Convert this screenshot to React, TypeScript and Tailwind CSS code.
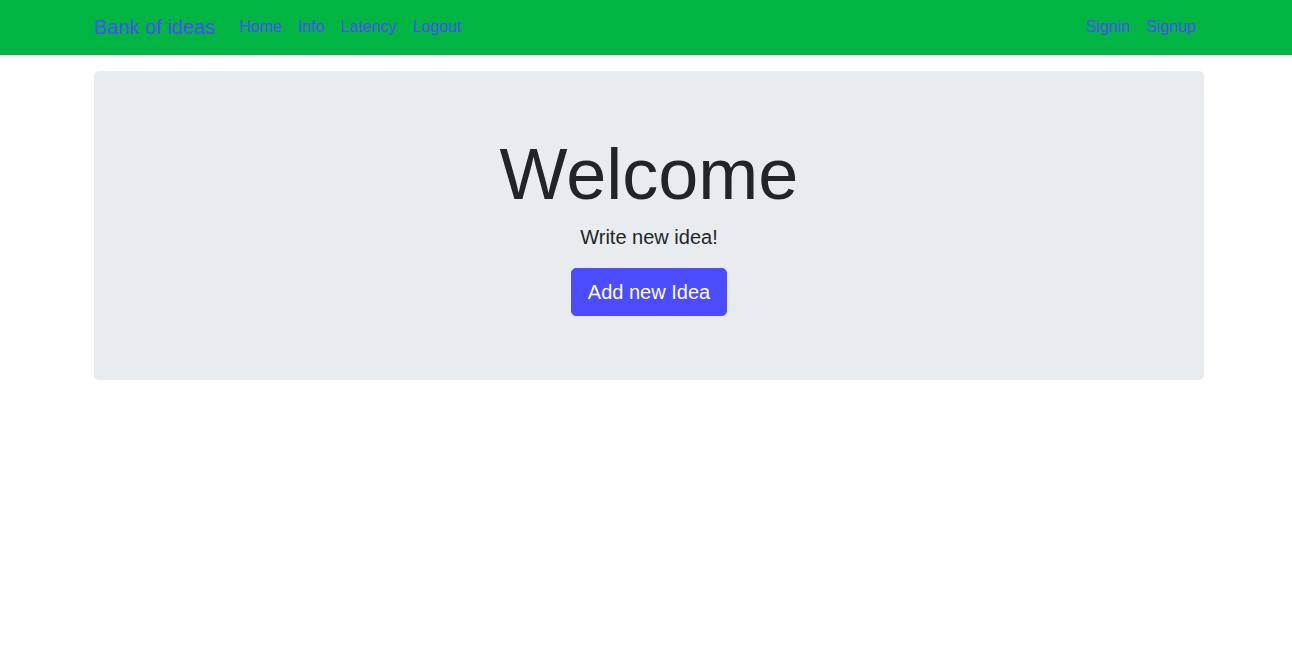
import React from "react";

export default function App() {
  return (
    <div className="min-h-screen bg-white text-[#212529]" style={{ fontFamily: '"Liberation Sans", Arial, sans-serif' }}>
      <nav className="bg-[#00b542] h-[55px] pb-[2px] flex items-center">
        <div className="ml-[94px] w-[1110px] flex items-center justify-between">
          <div className="flex items-center">
            <a className="text-[20px] leading-[30px] py-[5px] mr-4 text-[#4b4bff]" href="#">Bank of ideas</a>
            <div className="flex text-[16px] leading-6 text-[#4b4bff]">
              <a className="px-2 py-2" href="#">Home</a>
              <a className="px-2 py-2" href="#">Info</a>
              <a className="px-2 py-2" href="#">Latency</a>
              <a className="px-2 py-2" href="#">Logout</a>
            </div>
          </div>
          <div className="flex text-[16px] leading-6 text-[#4b4bff]">
            <a className="px-2 py-2" href="#">Signin</a>
            <a className="px-2 py-2" href="#">Signup</a>
          </div>
        </div>
      </nav>
      <div className="ml-[94px] w-[1110px] mt-4 bg-[#e9ecef] rounded-[5px] px-8 pt-16 pb-[64px] flex flex-col items-center">
        <h1 className="text-[72px] leading-[78px] font-light mb-[9px]">Welcome</h1>
        <p className="text-[20px] leading-[30px] mb-[16px]">Write new idea!</p>
        <button className="bg-[#4b4bff] text-white text-[20px] leading-[30px] px-4 py-2 rounded-[5px] border border-[#4b4bff]">Add new Idea</button>
      </div>
    </div>
  );
}
